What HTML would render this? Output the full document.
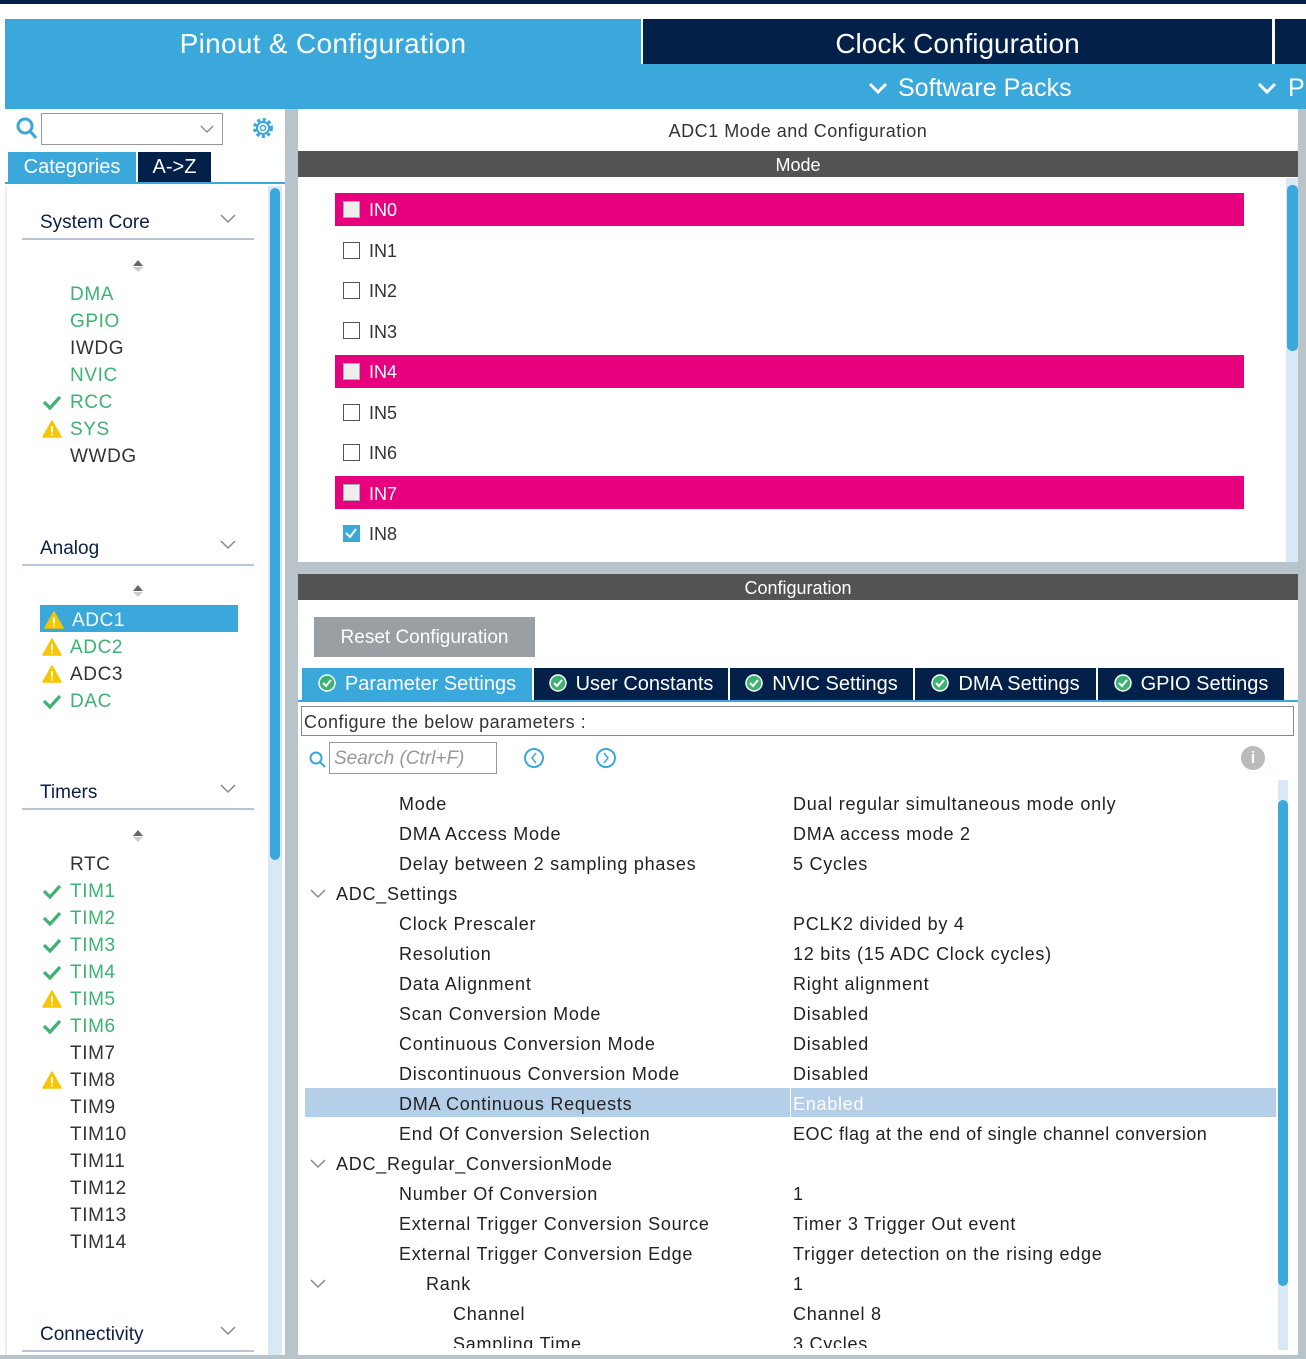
<!DOCTYPE html>
<html><head><meta charset="utf-8"><style>
*{margin:0;padding:0;box-sizing:border-box}
body{width:1306px;height:1359px;overflow:hidden;background:#fff;font-family:"Liberation Sans",sans-serif;position:relative}
.a{position:absolute;white-space:nowrap}
.g{color:#3cb371}
.k{color:#333}
.li{position:absolute;left:70px;font-size:19px;line-height:22px;letter-spacing:0.6px}
.ic{position:absolute;left:42px;width:20px;height:18px}
.cb{position:absolute;left:343px;width:17px;height:17px;border:1.5px solid #555;background:#fff}
.inl{position:absolute;left:369px;font-size:18px;color:#333}
.pink{position:absolute;left:335px;width:909px;height:33px;background:#e6007e}
.pr{position:absolute;font-size:18px;color:#222;line-height:20px;letter-spacing:0.75px}
.tab{position:absolute;top:668px;height:32px;background:#032049;color:#fff;font-size:20px;line-height:32px;text-align:center}
.chk{display:inline-block;width:18px;height:18px;vertical-align:-2px;margin-right:9px}
.sec{position:absolute;left:40px;font-size:19px;color:#0a1f44}
.sv{position:absolute;left:180px;top:2px}
.line{position:absolute;left:22px;width:232px;height:2px;background:#b8c4d8}
</style></head><body>
<svg width="0" height="0" style="position:absolute"><defs>
<symbol id="w" viewBox="0 0 20 18"><path d="M10 1 L19 17 L1 17 Z" fill="#f7c600" stroke="#f7c600" stroke-linejoin="round" stroke-width="1.5"/><rect x="9.1" y="6" width="1.8" height="6.5" fill="#fff"/><rect x="9.1" y="13.8" width="1.8" height="1.8" fill="#fff"/></symbol>
<symbol id="c" viewBox="0 0 20 18"><path d="M2 9 L8 15 L18 4" fill="none" stroke="#3cb371" stroke-width="3.2"/></symbol>
<symbol id="v" viewBox="0 0 16 10"><path d="M1 1 L8 8 L15 1" fill="none" stroke="#888" stroke-width="1.5"/></symbol>
<symbol id="t" viewBox="0 0 18 18"><circle cx="9" cy="9" r="8" fill="#3cb371" stroke="#fff" stroke-width="1.5"/><path d="M5 9 L8 12 L13 6" fill="none" stroke="#fff" stroke-width="2"/></symbol>
</defs></svg>
<div class="a" style="left:0;top:0;width:1306px;height:4px;background:#032049"></div>
<div class="a" style="left:5px;top:19px;width:636px;height:45px;background:#3aa8db;color:#fff;font-size:28px;text-align:center;line-height:50px;letter-spacing:0.3px">Pinout &amp; Configuration</div>
<div class="a" style="left:643px;top:19px;width:629px;height:45px;background:#032049;color:#fff;font-size:28px;text-align:center;line-height:50px">Clock Configuration</div>
<div class="a" style="left:1275px;top:19px;width:31px;height:45px;background:#032049"></div>
<div class="a" style="left:5px;top:64px;width:1301px;height:45px;background:#3aa8db;color:#fff;font-size:25px;line-height:48px">
<svg class="a" style="left:863px;top:18px" width="20" height="13" viewBox="0 0 20 13"><path d="M2 2 L10 10 L18 2" fill="none" stroke="#fff" stroke-width="3"/></svg>
<span class="a" style="left:893px">Software Packs</span>
<svg class="a" style="left:1252px;top:18px" width="20" height="13" viewBox="0 0 20 13"><path d="M2 2 L10 10 L18 2" fill="none" stroke="#fff" stroke-width="3"/></svg>
<span class="a" style="left:1283px">P</span></div>
<!-- left panel -->
<svg class="a" style="left:15px;top:116px" width="24" height="26"><circle cx="10" cy="10" r="7" fill="none" stroke="#3aa8db" stroke-width="3"/><line x1="15" y1="15" x2="21" y2="22" stroke="#3aa8db" stroke-width="3"/></svg>
<div class="a" style="left:41px;top:113px;width:182px;height:32px;border:1px solid #999"></div>
<svg class="a" style="left:200px;top:125px" width="14" height="9"><use href="#v"/></svg>
<svg class="a" style="left:250px;top:115px" width="26" height="26"><circle cx="13" cy="13" r="8" fill="none" stroke="#3aa8db" stroke-width="4" stroke-dasharray="3 2.3"/><circle cx="13" cy="13" r="6" fill="none" stroke="#3aa8db" stroke-width="2"/><circle cx="13" cy="13" r="2.5" fill="none" stroke="#3aa8db" stroke-width="1.5"/></svg>
<div class="a" style="left:8px;top:152px;width:128px;height:30px;background:#3aa8db;color:#fff;font-size:20px;text-align:center;line-height:30px">Categories</div>
<div class="a" style="left:138px;top:152px;width:73px;height:30px;background:#032049;color:#fff;font-size:20px;text-align:center;line-height:30px">A-&gt;Z</div>
<div class="a" style="left:5px;top:182px;width:280px;height:2px;background:#3aa8db"></div>
<div class="a" style="left:5px;top:186px;width:2px;height:1173px;background:#eee"></div>
<div class="a" style="left:268px;top:186px;width:14px;height:1173px;background:#d8e8f5"></div>
<div class="a" style="left:270px;top:188px;width:10px;height:672px;background:#3aa8db;border-radius:5px"></div>
<div class="a" style="left:285px;top:109px;width:13px;height:1250px;background:#b9c4ca"></div>
<div class="sec" style="top:212px">System Core<svg class="sv" width="16" height="10"><use href="#v"/></svg></div><div class="line" style="top:238px"></div>
<svg class="a" style="left:132px;top:259px" width="12" height="14"><path d="M6 1 L11 7 L1 7Z" fill="#666"/><path d="M1 8 L11 8 L6 13Z" fill="#ccc"/></svg>
<div class="li g" style="top:284px">DMA</div>
<div class="li g" style="top:311px">GPIO</div>
<div class="li k" style="top:338px">IWDG</div>
<div class="li g" style="top:365px">NVIC</div>
<svg class="ic" style="top:393px"><use href="#c"/></svg><div class="li g" style="top:392px">RCC</div>
<svg class="ic" style="top:420px"><use href="#w"/></svg><div class="li g" style="top:419px">SYS</div>
<div class="li k" style="top:446px">WWDG</div>
<div class="sec" style="top:538px">Analog<svg class="sv" width="16" height="10"><use href="#v"/></svg></div><div class="line" style="top:564px"></div>
<svg class="a" style="left:132px;top:584px" width="12" height="14"><path d="M6 1 L11 7 L1 7Z" fill="#666"/><path d="M1 8 L11 8 L6 13Z" fill="#ccc"/></svg>
<div class="a" style="left:40px;top:605px;width:198px;height:27px;background:#3aa8db"></div>
<svg class="ic" style="top:611px;left:44px"><use href="#w"/></svg><div class="li" style="top:610px;left:72px;color:#fff">ADC1</div>
<svg class="ic" style="top:638px"><use href="#w"/></svg><div class="li g" style="top:637px">ADC2</div>
<svg class="ic" style="top:665px"><use href="#w"/></svg><div class="li k" style="top:664px">ADC3</div>
<svg class="ic" style="top:692px"><use href="#c"/></svg><div class="li g" style="top:691px">DAC</div>
<div class="sec" style="top:782px">Timers<svg class="sv" width="16" height="10"><use href="#v"/></svg></div><div class="line" style="top:808px"></div>
<svg class="a" style="left:132px;top:829px" width="12" height="14"><path d="M6 1 L11 7 L1 7Z" fill="#666"/><path d="M1 8 L11 8 L6 13Z" fill="#ccc"/></svg>
<div class="li k" style="top:854px">RTC</div>
<svg class="ic" style="top:882px"><use href="#c"/></svg><div class="li g" style="top:881px">TIM1</div>
<svg class="ic" style="top:909px"><use href="#c"/></svg><div class="li g" style="top:908px">TIM2</div>
<svg class="ic" style="top:936px"><use href="#c"/></svg><div class="li g" style="top:935px">TIM3</div>
<svg class="ic" style="top:963px"><use href="#c"/></svg><div class="li g" style="top:962px">TIM4</div>
<svg class="ic" style="top:990px"><use href="#w"/></svg><div class="li g" style="top:989px">TIM5</div>
<svg class="ic" style="top:1017px"><use href="#c"/></svg><div class="li g" style="top:1016px">TIM6</div>
<div class="li k" style="top:1043px">TIM7</div>
<svg class="ic" style="top:1071px"><use href="#w"/></svg><div class="li k" style="top:1070px">TIM8</div>
<div class="li k" style="top:1097px">TIM9</div>
<div class="li k" style="top:1124px">TIM10</div>
<div class="li k" style="top:1151px">TIM11</div>
<div class="li k" style="top:1178px">TIM12</div>
<div class="li k" style="top:1205px">TIM13</div>
<div class="li k" style="top:1232px">TIM14</div>
<div class="sec" style="top:1324px">Connectivity<svg class="sv" width="16" height="10"><use href="#v"/></svg></div><div class="line" style="top:1350px"></div>
<div class="a" style="left:0;top:1355px;width:1306px;height:4px;background:#b9c4ca"></div>
<!-- right -->
<div class="a" style="left:1298px;top:109px;width:8px;height:1250px;background:#b9c4ca"></div>
<div class="a" style="left:298px;top:121px;width:1000px;text-align:center;font-size:18px;color:#333;letter-spacing:0.5px">ADC1 Mode and Configuration</div>
<div class="a" style="left:298px;top:151px;width:1000px;height:26px;background:#535353;color:#fff;font-size:18px;text-align:center;line-height:28px">Mode</div>
<div class="a" style="left:1286px;top:178px;width:12px;height:384px;background:#d8e8f5"></div>
<div class="a" style="left:1287px;top:185px;width:11px;height:166px;background:#3aa8db;border-radius:5px"></div>
<div class="pink" style="top:193px"></div><div class="pink" style="top:355px"></div><div class="pink" style="top:476px"></div>
<div class="cb" style="top:201px;background:#eee;border-color:#aaa"></div><div class="inl" style="top:200px;color:#fff">IN0</div>
<div class="cb" style="top:242px"></div><div class="inl" style="top:241px">IN1</div>
<div class="cb" style="top:282px"></div><div class="inl" style="top:281px">IN2</div>
<div class="cb" style="top:322px"></div><div class="inl" style="top:322px">IN3</div>
<div class="cb" style="top:363px;background:#eee;border-color:#aaa"></div><div class="inl" style="top:362px;color:#fff">IN4</div>
<div class="cb" style="top:404px"></div><div class="inl" style="top:403px">IN5</div>
<div class="cb" style="top:444px"></div><div class="inl" style="top:443px">IN6</div>
<div class="cb" style="top:484px;background:#eee;border-color:#aaa"></div><div class="inl" style="top:484px;color:#fff">IN7</div>
<div class="cb" style="top:525px;background:#3aa8db;border-color:#3aa8db"><svg width="14" height="14" style="position:absolute;left:0;top:0"><path d="M2 7 L6 11 L12 3" fill="none" stroke="#fff" stroke-width="2"/></svg></div><div class="inl" style="top:524px">IN8</div>
<div class="a" style="left:298px;top:562px;width:1000px;height:12px;background:#b9c4ca"></div>
<div class="a" style="left:298px;top:574px;width:1000px;height:26px;background:#535353;color:#fff;font-size:18px;text-align:center;line-height:28px">Configuration</div>
<div class="a" style="left:314px;top:617px;width:221px;height:40px;background:#9a9fa3;color:#fff;font-size:19px;text-align:center;line-height:42px">Reset Configuration</div>
<div class="tab" style="left:302px;width:230px;background:#3aa8db"><svg class="chk"><use href="#t"/></svg>Parameter Settings</div>
<div class="tab" style="left:534px;width:194px"><svg class="chk"><use href="#t"/></svg>User Constants</div>
<div class="tab" style="left:730px;width:183px"><svg class="chk"><use href="#t"/></svg>NVIC Settings</div>
<div class="tab" style="left:915px;width:181px"><svg class="chk"><use href="#t"/></svg>DMA Settings</div>
<div class="tab" style="left:1098px;width:186px"><svg class="chk"><use href="#t"/></svg>GPIO Settings</div>
<div class="a" style="left:298px;top:700px;width:1000px;height:2px;background:#3aa8db"></div>
<div class="a" style="left:301px;top:706px;width:993px;height:30px;border:1px solid #888;font-size:18px;color:#333;line-height:31px;padding-left:2px;letter-spacing:0.5px">Configure the below parameters :</div>
<svg class="a" style="left:308px;top:750px" width="20" height="20"><circle cx="8" cy="8" r="5.5" fill="none" stroke="#3aa8db" stroke-width="2"/><line x1="12" y1="12" x2="17" y2="17" stroke="#3aa8db" stroke-width="2"/></svg>
<div class="a" style="left:329px;top:742px;width:168px;height:32px;border:1px solid #999;color:#999;font-style:italic;font-size:19px;line-height:32px;padding-left:4px">Search (Ctrl+F)</div>
<svg class="a" style="left:523px;top:747px" width="22" height="22"><circle cx="11" cy="11" r="9" fill="none" stroke="#3aa8db" stroke-width="2"/><path d="M13 6 L9 11 L13 16" fill="none" stroke="#3aa8db" stroke-width="1.5"/></svg>
<svg class="a" style="left:595px;top:747px" width="22" height="22"><circle cx="11" cy="11" r="9" fill="none" stroke="#3aa8db" stroke-width="2"/><path d="M9 6 L13 11 L9 16" fill="none" stroke="#3aa8db" stroke-width="1.5"/></svg>
<div class="a" style="left:1241px;top:746px;width:24px;height:24px;background:#bbb;border-radius:50%;color:#fff;font-weight:bold;font-size:17px;text-align:center;line-height:24px">i</div>
<div class="a" style="left:1278px;top:780px;width:10px;height:570px;background:#d8e8f5"></div>
<div class="a" style="left:1278px;top:800px;width:10px;height:486px;background:#3aa8db;border-radius:5px"></div>
<div class="a" style="left:305px;top:1088px;width:971px;height:29px;background:#b5cfe8"></div>
<div class="a" style="left:790px;top:1088px;width:1px;height:29px;background:#fff"></div>
<div class="pr" style="left:399px;top:794px">Mode</div><div class="pr" style="left:793px;top:794px">Dual regular simultaneous mode only</div>
<div class="pr" style="left:399px;top:824px">DMA Access Mode</div><div class="pr" style="left:793px;top:824px">DMA access mode 2</div>
<div class="pr" style="left:399px;top:854px">Delay between 2 sampling phases</div><div class="pr" style="left:793px;top:854px">5 Cycles</div>
<svg class="a" style="left:310px;top:889px" width="16" height="10"><use href="#v"/></svg><div class="pr" style="left:336px;top:884px">ADC_Settings</div>
<div class="pr" style="left:399px;top:914px">Clock Prescaler</div><div class="pr" style="left:793px;top:914px">PCLK2 divided by 4</div>
<div class="pr" style="left:399px;top:944px">Resolution</div><div class="pr" style="left:793px;top:944px">12 bits (15 ADC Clock cycles)</div>
<div class="pr" style="left:399px;top:974px">Data Alignment</div><div class="pr" style="left:793px;top:974px">Right alignment</div>
<div class="pr" style="left:399px;top:1004px">Scan Conversion Mode</div><div class="pr" style="left:793px;top:1004px">Disabled</div>
<div class="pr" style="left:399px;top:1034px">Continuous Conversion Mode</div><div class="pr" style="left:793px;top:1034px">Disabled</div>
<div class="pr" style="left:399px;top:1064px">Discontinuous Conversion Mode</div><div class="pr" style="left:793px;top:1064px">Disabled</div>
<div class="pr" style="left:399px;top:1094px">DMA Continuous Requests</div><div class="pr" style="left:793px;top:1094px;color:#fff">Enabled</div>
<div class="pr" style="left:399px;top:1124px">End Of Conversion Selection</div><div class="pr" style="left:793px;top:1124px;letter-spacing:0.5px">EOC flag at the end of single channel conversion</div>
<svg class="a" style="left:310px;top:1159px" width="16" height="10"><use href="#v"/></svg><div class="pr" style="left:336px;top:1154px">ADC_Regular_ConversionMode</div>
<div class="pr" style="left:399px;top:1184px">Number Of Conversion</div><div class="pr" style="left:793px;top:1184px">1</div>
<div class="pr" style="left:399px;top:1214px">External Trigger Conversion Source</div><div class="pr" style="left:793px;top:1214px">Timer 3 Trigger Out event</div>
<div class="pr" style="left:399px;top:1244px">External Trigger Conversion Edge</div><div class="pr" style="left:793px;top:1244px">Trigger detection on the rising edge</div>
<svg class="a" style="left:310px;top:1279px" width="16" height="10"><use href="#v"/></svg><div class="pr" style="left:426px;top:1274px">Rank</div><div class="pr" style="left:793px;top:1274px">1</div>
<div class="pr" style="left:453px;top:1304px">Channel</div><div class="pr" style="left:793px;top:1304px">Channel 8</div>
<div class="pr" style="left:453px;top:1334px">Sampling Time</div><div class="pr" style="left:793px;top:1334px">3 Cycles</div>
<div class="a" style="left:298px;top:1348px;width:980px;height:7px;background:#fff"></div>
</body></html>
